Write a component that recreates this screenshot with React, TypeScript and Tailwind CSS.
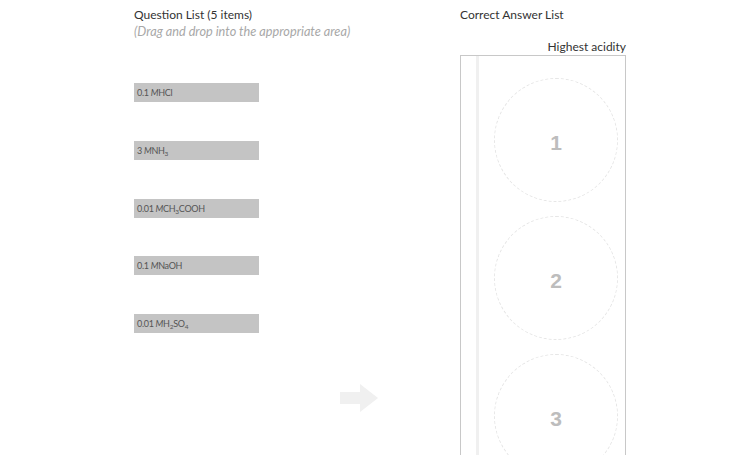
import React from "react";

const sub = "text-[6.5px] align-baseline relative top-[2px]";

const items: React.ReactNode[] = [
  <>0.1 <i className="italic">M</i>HCl</>,
  <>3 <i className="italic">M</i>NH<span className={sub}>3</span></>,
  <>0.01 <i className="italic">M</i>CH<span className={sub}>3</span>COOH</>,
  <>0.1 <i className="italic">M</i>NaOH</>,
  <>0.01 <i className="italic">M</i>H<span className={sub}>2</span>SO<span className={sub}>4</span></>,
];

export default function App() {
  return (
    <div className="h-[455px] overflow-hidden bg-white font-['Lato','Liberation_Sans',sans-serif]">
      <div className="flex pl-[134px] pt-[7px]">
        <div className="w-[326px] flex flex-col">
          <div className="text-[12px] leading-[16px] text-[#333]">Question List (5 items)</div>
          <div className="text-[12.7px] leading-[16px] italic text-[#a8a8a8] mt-[0px]">(Drag and drop into the appropriate area)</div>
          <div className="flex flex-col gap-[38.75px] mt-[44px]">
            {items.map((it, i) => (
              <div key={i} className="w-[125px] h-[19px] bg-[#c4c4c4] text-[9px] leading-[19px] text-[#555] pl-[3px] tracking-[-0.3px]">
                {it}
              </div>
            ))}
          </div>
          <div className="ml-[206px] mt-[51px] w-[38px] h-[28px]">
            <svg width="38" height="28" viewBox="0 0 38 28">
              <polygon points="0,8 20,8 20,0 38,14 20,28 20,20 0,20" fill="#f0f0f0" />
            </svg>
          </div>
        </div>
        <div className="w-[166px] flex flex-col">
          <div className="text-[12px] leading-[16px] text-[#333]">Correct Answer List</div>
          <div className="text-[12px] leading-[16px] text-[#333] text-right mt-[16px]">Highest acidity</div>
          <div className="border border-[#c8c8c8] flex h-[520px]">
            <div className="w-[15px]" />
            <div className="w-[3px] bg-[#f0f0f0]" />
            <div className="flex flex-col gap-[14px] pl-[15px] pt-[22px]">
              {[1, 2, 3].map((n) => (
                <div key={n} className="w-[124px] h-[124px] rounded-full border border-dashed border-[#e6e6e6] flex items-center justify-center">
                  <span className="font-['Liberation_Sans',sans-serif] font-bold text-[21px] text-[#bdbdbd] mt-[6px]">{n}</span>
                </div>
              ))}
            </div>
          </div>
        </div>
      </div>
    </div>
  );
}
